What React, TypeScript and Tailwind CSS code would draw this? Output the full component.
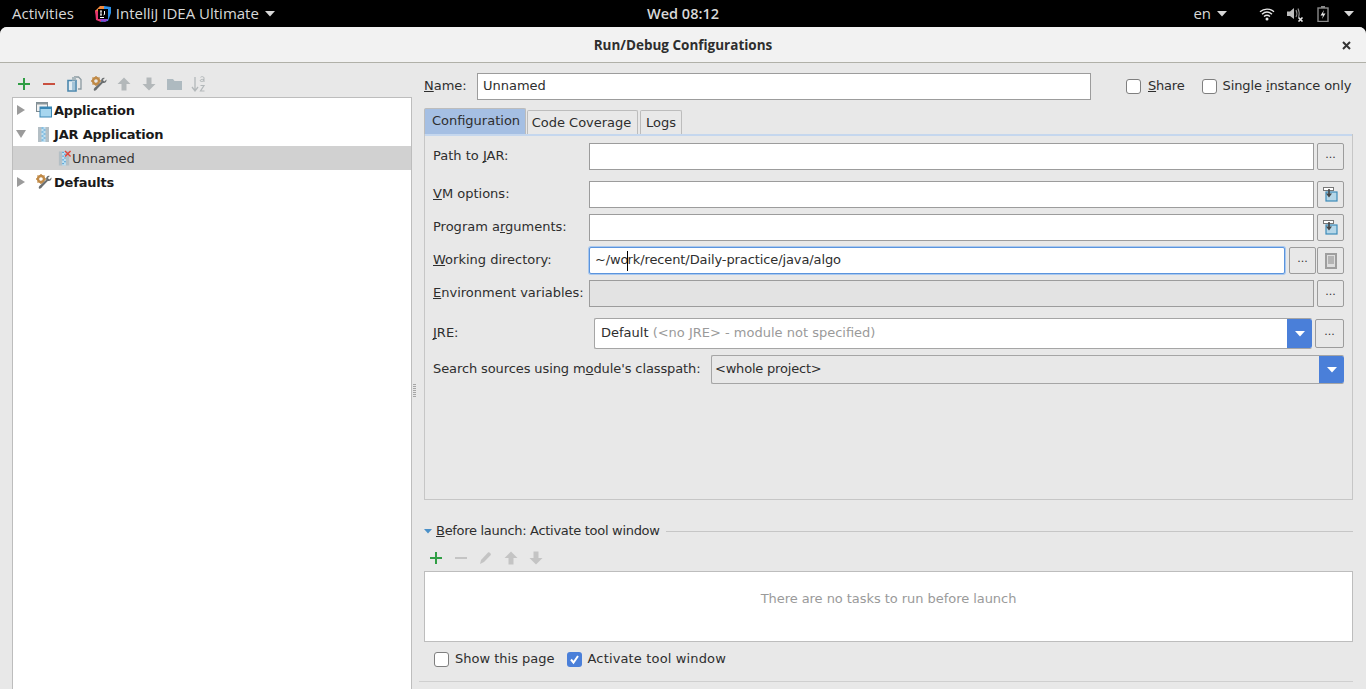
import React from "react";

const Caret = ({ cls = "" }: { cls?: string }) => (
  <svg width="10" height="6" viewBox="0 0 10 6" className={cls}><path d="M0 0h10L5 5.500z" fill="currentColor" /></svg>
);

const U = ({ children }: { children: React.ReactNode }) => (
  <u className="[text-decoration-skip-ink:none]">{children}</u>
);

const Logo = () => (
  <svg width="16" height="16" viewBox="0 0 16 16">
    <path d="M0 5L5 0h5l-2 8H1z" fill="#f28a3c" />
    <path d="M0 4l1 10 5 2 2-8z" fill="#e7356f" />
    <path d="M9 0l7 1v6l-3 8-7 1 3-9z" fill="#2b8fe6" />
    <path d="M4 14l6 2 3-2-3-3z" fill="#8f3fd0" />
    <rect x="3" y="3" width="10" height="10" fill="#000" />
    <path d="M5 5h2M6 5v4M5 9h2M9.500 5v3.500l-1 .5" stroke="#fff" strokeWidth="1" fill="none" />
    <rect x="5" y="11" width="4" height="1" fill="#fff" />
  </svg>
);

const Wifi = () => (
  <svg width="16" height="14" viewBox="0 0 16 14" fill="none" stroke="#e6e6e6" strokeWidth="1.400">
    <path d="M1 4.800c4-3.600 10-3.600 14 0M3 7.200c3-2.600 7-2.600 10 0M5 9.500c1.800-1.500 4.200-1.500 6 0" />
    <circle cx="8" cy="12" r="1.500" fill="#e6e6e6" stroke="none" />
  </svg>
);

const Speaker = () => (
  <svg width="18" height="16" viewBox="0 0 18 16" fill="none">
    <path d="M1 5.500h3L8 2v11L4 10H1z" fill="#bdbdbd" />
    <path d="M10 4c1 2 1 5 0 7M12 2.500c1.500 3 1.500 6 .6 9" stroke="#8d8d8d" strokeWidth="1.100" />
    <path d="M12.500 11.500l4 4M16.500 11.500l-4 4" stroke="#e6e6e6" strokeWidth="1.600" />
  </svg>
);

const Battery = () => (
  <svg width="12" height="16" viewBox="0 0 12 16" fill="none">
    <rect x="4" y="0" width="4" height="2" fill="#8a8a8a" />
    <rect x="1" y="2" width="10" height="13.500" fill="none" stroke="#8a8a8a" strokeWidth="1.400" />
    <path d="M7 4L3.500 9.500H6L5 13l3.500-5.500H6z" fill="#e6e6e6" />
  </svg>
);

const Plus = ({ color = "#2f9e44" }: { color?: string }) => (
  <svg width="14" height="14" viewBox="0 0 14 14"><path d="M6 1h2v5h5v2H8v5H6V8H1V6h5z" fill={color} /></svg>
);
const Minus = ({ color = "#c9503f" }: { color?: string }) => (
  <svg width="14" height="14" viewBox="0 0 14 14"><rect x="1" y="6" width="12" height="2" fill={color} /></svg>
);
const ArrowUp = ({ color = "#b3b8ba" }: { color?: string }) => (
  <svg width="14" height="14" viewBox="0 0 14 14"><path d="M7 .5L13.500 7H9.500v6.500h-5V7H.5z" fill={color} /></svg>
);
const ArrowDown = ({ color = "#b3b8ba" }: { color?: string }) => (
  <svg width="14" height="14" viewBox="0 0 14 14"><path d="M7 13.500L.5 7h4V.5h5V7h4z" fill={color} /></svg>
);
const Copy = () => (
  <svg width="16" height="16" viewBox="0 0 16 16" fill="none">
    <path d="M8 1h4.500L15 3.500V13h-3" stroke="#8c9aa1" strokeWidth="1.300" />
    <path d="M2 4.500h8V15H2z" fill="#e3edf3" stroke="#4b87ad" strokeWidth="1.600" />
    <path d="M6 1h4v3.500H6z" fill="#a9b7bd" />
    <rect x="6" y="6" width="3" height="8" fill="#a4c4d8" />
  </svg>
);
const Tools = () => (
  <svg width="16" height="16" viewBox="0 0 16 16" fill="none">
    <circle cx="5" cy="5" r="3" stroke="#c08a47" strokeWidth="2.400" />
    <path d="M5 0v2M5 8v2M0 5h2M8 5h2M1.500 1.500l1.200 1.200M8.500 1.500L7.300 2.700M1.500 8.500l1.200-1.200" stroke="#c08a47" strokeWidth="1.300" />
    <path d="M15.500 3.500c.5 2-1.500 4.200-3.700 3.400L6.500 12.500c-.7 1.400-2.600 2.900-3.500 2-.9-.9.3-2.600 1.500-3.500l5.700-5.200C9.500 3.500 11.500 1.300 13.800 2L11.800 4l1.500 1.500z" fill="#6b6f71" />
  </svg>
);
const Folder = () => (
  <svg width="15" height="13" viewBox="0 0 15 13"><path d="M0 1h6l1.500 2H15v9H0z" fill="#aebac0" /></svg>
);
const SortAz = () => (
  <svg width="16" height="17" viewBox="0 0 16 17" fill="none">
    <path d="M4 1v13M1 11l3 4 3-4" stroke="#b3b8ba" strokeWidth="1.300" />
    <path d="M9.500 1.300c.6-.9 3.500-1 3.500.6V6M13 3.500c-2.500-.3-3.800.2-3.800 1.200 0 1 2.400 1.200 3.800-.3" stroke="#b3b8ba" strokeWidth="1" />
    <path d="M9.500 9.500H13L9.500 15H13.500" stroke="#b3b8ba" strokeWidth="1.200" />
  </svg>
);
const AppIcon = () => (
  <svg width="16" height="16" viewBox="0 0 16 16" fill="none">
    <rect x="0.500" y="0.500" width="11" height="9" fill="#f1f1f1" stroke="#7d8b92" />
    <rect x="0.500" y="0.500" width="11" height="2" fill="#8c979c" />
    <rect x="4" y="5" width="11.500" height="10" fill="#a6d6ef" stroke="#3a87b5" />
    <rect x="4" y="5" width="11.500" height="2" fill="#3a87b5" />
  </svg>
);
const JarIcon = ({ x = false }: { x?: boolean }) => (
  <svg width="16" height="16" viewBox="0 0 16 16" fill="none">
    <rect x="2" y="1" width="11" height="15" fill="#b4bfc5" />
    <rect x="5.500" y="1" width="4" height="15" fill="#bfe0f2" />
    <path d="M5.500 2h2M7.500 4h2M5.500 6h2M7.500 8h2M5.500 10h2M7.500 12h2M5.500 14h2" stroke="#4a9bd0" strokeWidth="1" />
    {x && <path d="M8.500.5l6 6M14.500.5l-6 6" stroke="#e0443a" strokeWidth="1.500" />}
  </svg>
);
const Triangle = ({ open = false }: { open?: boolean }) =>
  open ? (
    <svg width="10" height="8" viewBox="0 0 10 8" className="-ml-px"><path d="M0 0h10L5 8z" fill="#9b9b9b" /></svg>
  ) : (
    <svg width="8" height="10" viewBox="0 0 8 10"><path d="M0 0v10l8-5z" fill="#9b9b9b" /></svg>
  );

const TreeRow = ({ icon, label, arrow, bold = true, selected = false, indent = false }: { icon: React.ReactNode; label: string; arrow?: "open" | "closed"; bold?: boolean; selected?: boolean; indent?: boolean }) => (
  <div className={`flex h-6 items-center ${selected ? "bg-[#d1d1d1]" : ""}`}>
    <span className="flex w-[23px] shrink-0 justify-start pl-[4px]">
      {arrow && <Triangle open={arrow === "open"} />}
    </span>
    {indent && <span className="w-[21px] shrink-0" />}
    <span className={`flex shrink-0 items-center ${indent ? "w-[15px]" : "w-[18px]"}`}>{icon}</span>
    <span className={bold ? "pt-px font-bold tracking-[-0.2px] text-[#1a1a1a]" : "pt-px text-[#333]"}>{label}</span>
  </div>
);

const Label = ({ children }: { children: React.ReactNode }) => (
  <span className="w-[153px] shrink-0 whitespace-nowrap pb-[2px] text-[#2e2e2e]">{children}</span>
);

const Dots = () => (
  <button className="flex h-[27px] w-[27px] shrink-0 items-center justify-center rounded-[2px] border border-[#9c9c9c] pb-1 text-[11px] leading-none text-[#333]">...</button>
);

const ExpandIcon = () => (
  <svg width="15" height="15" viewBox="0 0 15 15" fill="none">
    <rect x="3" y="5" width="11" height="9" fill="#b4d6e8" stroke="#3d8ab8" strokeWidth="1.200" />
    <rect x="0.500" y="0.500" width="10" height="3" fill="#fff" stroke="#777" />
    <path d="M6 2v7" stroke="#444" strokeWidth="1.600" />
    <path d="M3 6.500h6L6 10.500z" fill="#444" />
  </svg>
);

const IconBtn = ({ children }: { children: React.ReactNode }) => (
  <button className="flex h-[27px] w-[27px] shrink-0 items-center justify-center rounded-[2px] border border-[#9c9c9c]">{children}</button>
);

const Input = ({ disabled = false }: { disabled?: boolean }) => (
  <div className={`h-[27px] flex-1 border border-[#9c9c9c] ${disabled ? "bg-[#e3e3e3]" : "bg-white"}`} />
);

const Check = ({ checked = false }: { checked?: boolean }) =>
  checked ? (
    <span className="flex h-[15px] w-[15px] shrink-0 items-center justify-center rounded-[3px] bg-[#4a7fd9]">
      <svg width="11" height="11" viewBox="0 0 11 11" fill="none"><path d="M2 5.500l2.500 3L9 2" stroke="#fff" strokeWidth="2" /></svg>
    </span>
  ) : (
    <span className="h-[15px] w-[15px] shrink-0 rounded-[3px] border border-[#7f7f7f] bg-white" />
  );

const BlueDrop = () => (
  <span className="flex h-full w-[25px] shrink-0 items-center justify-center rounded-r-[2px] bg-[#4a7fd9] text-white">
    <Caret />
  </span>
);

const Slot = ({ children }: { children: React.ReactNode }) => (
  <span className="flex w-[25px] shrink-0 items-center justify-center pr-px">{children}</span>
);

export default function App() {
  return (
    <div className="flex h-[689px] w-[1366px] flex-col overflow-hidden bg-black font-['DejaVu_Sans',sans-serif] text-[13px] text-[#2e2e2e]">
      {/* GNOME top bar */}
      <div className="relative flex h-[27px] shrink-0 items-center justify-between pl-3 pr-[12px] font-['Open_Sans',sans-serif] text-[15px] text-[#d8d8d8]">
        <div className="flex items-center">
          <span>Activities</span>
          <span className="ml-[21px]"><Logo /></span>
          <span className="ml-[5px]">IntelliJ IDEA Ultimate</span>
          <Caret cls="ml-[6px] text-[#d8d8d8]" />
        </div>
        <span className="absolute left-[647px] text-[14.500px] font-semibold">Wed 08:12</span>
        <div className="flex items-center">
          <span>en</span>
          <Caret cls="ml-[6px] mr-[32px]" />
          <Wifi />
          <span className="ml-[11px]"><Speaker /></span>
          <span className="ml-[13px]"><Battery /></span>
          <Caret cls="ml-[15px]" />
        </div>
      </div>

      {/* Window */}
      <div className="flex min-h-0 flex-1 flex-col rounded-t-[7px] bg-[#e8e8e8]">
        <div className="relative flex h-[36px] shrink-0 items-center justify-center rounded-t-[7px] border-b border-[#b0b0a8] bg-[#f2f2f2]">
          <span className="pt-px font-['Open_Sans',sans-serif] text-[13.500px] font-bold text-[#2e2e2e]">Run/Debug Configurations</span>
          <svg className="absolute right-[15px] top-[14px]" width="9" height="9" viewBox="0 0 9 9"><path d="M1 1l7 7M8 1l-7 7" stroke="#333" strokeWidth="2" /></svg>
        </div>

        <div className="flex min-h-0 flex-1">
          {/* Left */}
          <div className="flex w-[412px] shrink-0 flex-col pl-[12px]">
            <div className="flex h-[34px] shrink-0 items-center pt-[8px]">
              <Slot><Plus /></Slot>
              <Slot><Minus /></Slot>
              <Slot><Copy /></Slot>
              <Slot><Tools /></Slot>
              <Slot><ArrowUp /></Slot>
              <Slot><ArrowDown /></Slot>
              <Slot><Folder /></Slot>
              <Slot><SortAz /></Slot>
            </div>
            <div className="flex-1 border-l border-r border-t border-[#bdbdbd] bg-white">
              <TreeRow arrow="closed" icon={<AppIcon />} label="Application" />
              <TreeRow arrow="open" icon={<JarIcon />} label="JAR Application" />
              <TreeRow selected indent bold={false} icon={<JarIcon x />} label="Unnamed" />
              <TreeRow arrow="closed" icon={<Tools />} label="Defaults" />
            </div>
          </div>

          {/* Splitter */}
          <div className="relative w-[12px] shrink-0">
            <span className="absolute left-[1px] top-[320px] h-[14px] w-[3px] bg-[repeating-linear-gradient(0deg,#a5a5a5_0_1px,transparent_1px_2px)]" />
          </div>

          {/* Right */}
          <div className="flex min-w-0 flex-1 flex-col pr-[13px]">
            <div className="mt-[10px] flex h-[27px] shrink-0 items-center whitespace-nowrap">
              <span className="w-[53px] shrink-0 pb-[2px]"><U>N</U>ame:</span>
              <div className="flex h-[27px] w-[614px] shrink-0 items-center border border-[#9c9c9c] bg-white pb-[2px] pl-[5px]">Unnamed</div>
              <span className="ml-[35px] flex items-center gap-[7px]"><Check /><span className="pb-[2px] tracking-[-0.2px]"><U>S</U>hare</span></span>
              <span className="ml-[17px] flex items-center gap-[6px]"><Check /><span className="pb-[2px] tracking-[-0.1px]">Single <U>i</U>nstance only</span></span>
            </div>

            <div className="mt-[8px] flex h-[26px] shrink-0 items-end">
              <span className="flex h-[26px] w-[102px] items-center justify-center rounded-t-[2px] border border-b-0 border-[#bcbcbc] bg-[#a5bfe3] pb-[2px] pl-[2px]">Configuration</span>
              <span className="ml-px flex h-[24px] w-[111px] items-center justify-center rounded-t-[2px] border border-b-0 border-[#bcbcbc] pr-[2px]">Code Coverage</span>
              <span className="ml-[2px] flex h-[24px] w-[42px] items-center justify-center rounded-t-[2px] border border-b-0 border-[#bcbcbc]">Logs</span>
            </div>

            <div className="flex h-[366px] shrink-0 flex-col border border-t-0 border-[#c6c6c6] pl-[8px] pr-[8px]">
              <div className="-ml-[8px] -mr-[8px] h-[2px] shrink-0 bg-[#c5d7ee]" />
              <div className="mt-[7px] flex items-center gap-[3px]">
                <Label>Path to <U>J</U>AR:</Label>
                <Input />
                <Dots />
              </div>
              <div className="mt-[11px] flex items-center gap-[3px]">
                <Label><U>V</U>M options:</Label>
                <Input />
                <IconBtn><ExpandIcon /></IconBtn>
              </div>
              <div className="mt-[6px] flex items-center gap-[3px]">
                <Label>Program a<U>r</U>guments:</Label>
                <Input />
                <IconBtn><ExpandIcon /></IconBtn>
              </div>
              <div className="mt-[6px] flex items-center gap-[3px]">
                <Label><U>W</U>orking directory:</Label>
                <div className="flex h-[27px] flex-1 items-center rounded-[2px] border border-[#5b94dd] bg-white pl-[5px] shadow-[0_0_0_1px_#a9c8ee]">
                  <span className="pb-[2px] tracking-[-0.1px]">~/wo</span><span className="-mx-px h-[20px] w-px bg-black" /><span className="pb-[2px] tracking-[-0.1px]">rk/recent/Daily-practice/java/algo</span>
                </div>
                <span className="ml-[1px]"><Dots /></span>
                <span className="-ml-[2px]">
                  <IconBtn>
                    <svg width="12" height="16" viewBox="0 0 12 16"><path d="M0 0h12v16H0z" fill="#9e9e9e" /><path d="M2 2h8v12H2z" fill="#dedede" /><path d="M3 4h6M3 6h6M3 8h6M3 10h6" stroke="#8a8a8a" /></svg>
                  </IconBtn>
                </span>
              </div>
              <div className="mt-[6px] flex items-center gap-[3px]">
                <Label><U>E</U>nvironment variables:</Label>
                <Input disabled />
                <Dots />
              </div>
              <div className="mt-[11px] flex items-center">
                <span className="w-[161px] shrink-0 pb-[2px]"><U>J</U>RE:</span>
                <div className="flex h-[31px] flex-1 items-center rounded-[2px] border border-r-0 border-[#a5a5a5] bg-white pl-[6px]">
                  <span className="flex-1 pb-[2px]">Default <span className="text-[#9a9a9a]">(&lt;no JRE&gt; - module not specified)</span></span>
                  <BlueDrop />
                </div>
                <span className="ml-[3px] flex h-[29px] w-[29px] items-center justify-center rounded-[2px] border border-[#9c9c9c] pb-1 text-[11px] leading-none text-[#333]">...</span>
              </div>
              <div className="mt-[6px] flex items-center">
                <span className="w-[278px] shrink-0 whitespace-nowrap pb-[2px] tracking-[-0.1px]">Search sources using m<U>o</U>dule's classpath:</span>
                <div className="flex h-[29px] flex-1 items-center rounded-[2px] border border-r-0 border-[#a5a5a5] pl-[3px]">
                  <span className="flex-1 pb-[2px] tracking-[-0.2px]">&lt;whole project&gt;</span>
                  <BlueDrop />
                </div>
              </div>
            </div>

            <div className="mt-[23px] flex h-[16px] shrink-0 items-center">
              <Caret cls="mr-[4px] h-[5px] w-[8px] text-[#4a90c8]" />
              <span className="tracking-[-0.3px]"><U>B</U>efore launch: Activate tool window</span>
              <span className="ml-[6px] h-px flex-1 bg-[#c6c6c6]" />
            </div>
            <div className="mt-[11px] flex h-[16px] shrink-0 items-center">
              <Slot><Plus /></Slot>
              <Slot><Minus color="#c4c4c4" /></Slot>
              <Slot><svg width="14" height="14" viewBox="0 0 14 14"><path d="M1 13l1-4 7-7.500c1-.8 3.500 1.200 2.800 2.500L5 11z" fill="#c4c4c4" /></svg></Slot>
              <Slot><ArrowUp color="#c4c4c4" /></Slot>
              <Slot><ArrowDown color="#c4c4c4" /></Slot>
            </div>
            <div className="mt-[5px] flex h-[71px] shrink-0 items-center justify-center border border-[#bdbdbd] bg-white pb-[16px] tracking-[-0.05px] text-[#9a9a9a]">There are no tasks to run before launch</div>
            <div className="mt-[8px] flex h-[18px] shrink-0 items-center pl-[10px]">
              <span className="flex items-center gap-[6px]"><Check /><span>Show this page</span></span>
              <span className="ml-[12px] flex items-center gap-[6px]"><Check checked /><span className="tracking-[0.15px]">Activate tool window</span></span>
            </div>
            <div className="-ml-[5px] mt-[13px] h-px shrink-0 bg-[#cfcfcf]" />
          </div>
        </div>
      </div>
    </div>
  );
}
